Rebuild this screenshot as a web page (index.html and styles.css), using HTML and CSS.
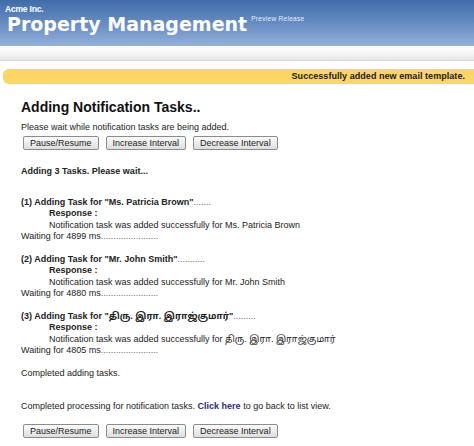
FILE: index.html
```html
<!DOCTYPE html>
<html lang="en">
<head>
  <meta charset="UTF-8" />
  <title>Property Management</title>
  <link rel="stylesheet" href="styles.css">
</head>
<body>

  <div class="header">
    <div class="company">Acme Inc.</div>
    <div class="title">Property Management<span class="release">Preview Release</span></div>
  </div>
  <div class="subbar"></div>

  <div class="message">Successfully added new email template.</div>

  <div class="content">
    <h2>Adding Notification Tasks..</h2>
    <p class="intro">Please wait while notification tasks are being added.</p>
    <div class="controls">
      <button>Pause/Resume</button>
      <button>Increase Interval</button>
      <button>Decrease Interval</button>
    </div>

    <div class="log">
      <div class="line strong count">Adding 3 Tasks. Please wait...</div>

      <div class="task">
        <div class="line strong">(1) Adding Task for "Ms. Patricia Brown"<span class="dots">.......</span></div>
        <div class="line strong indent">Response :</div>
        <div class="line indent">Notification task was added successfully for Ms. Patricia Brown</div>
        <div class="line">Waiting for 4899 ms<span class="dots">.......................</span></div>
      </div>

      <div class="task">
        <div class="line strong">(2) Adding Task for "Mr. John Smith"<span class="dots">...........</span></div>
        <div class="line strong indent">Response :</div>
        <div class="line indent">Notification task was added successfully for Mr. John Smith</div>
        <div class="line">Waiting for 4880 ms<span class="dots">.......................</span></div>
      </div>

      <div class="task">
        <div class="line strong">(3) Adding Task for "திரு. இரா. இராஜ்குமார்"<span class="dots">.........</span></div>
        <div class="line strong indent">Response :</div>
        <div class="line indent">Notification task was added successfully for திரு. இரா. இராஜ்குமார்</div>
        <div class="line">Waiting for 4805 ms<span class="dots">.......................</span></div>
      </div>

      <div class="line done">Completed adding tasks.</div>
      <div class="line finished">Completed processing for notification tasks. <a href="#">Click here</a> to go back to list view.</div>
    </div>

    <div class="controls bottom">
      <button>Pause/Resume</button>
      <button>Increase Interval</button>
      <button>Decrease Interval</button>
    </div>
  </div>

</body>
</html>
```

FILE: styles.css
```css
* {
  box-sizing: border-box;
}

body {
  margin: 0;
  font-family: "Liberation Sans", Arial, "Noto Sans Tamil", sans-serif;
  font-size: 9px;
  color: #222;
  background: #fff;
}

/* Header */
.header {
  height: 46px;
  padding: 4px 0 0 5px;
  background: linear-gradient(to bottom, #3f6ca9 0%, #6a8fc4 55%, #93b0da 100%);
  color: #fff;
}

.company {
  font-weight: bold;
  font-size: 8.5px;
  line-height: 10px;
  letter-spacing: -0.2px;
}

.title {
  font-family: "DejaVu Sans", Verdana, sans-serif;
  font-weight: bold;
  font-size: 19px;
  line-height: 22px;
  margin-left: 2px;
  margin-top: -1px;
}

.release {
  font-family: "Liberation Sans", Arial, sans-serif;
  font-weight: normal;
  font-size: 6.5px;
  vertical-align: top;
  position: relative;
  top: -5px;
  margin-left: 4px;
  letter-spacing: 0.3px;
  color: #e8eef8;
}

.subbar {
  height: 15px;
  background: linear-gradient(to bottom, #ffffff 0%, #f4f4f4 60%, #e6e6e6 100%);
  border-bottom: 1px solid #d6d6d6;
}

/* Status message */
.message {
  margin: 8px 0 0 3px;
  height: 15px;
  line-height: 15px;
  padding-right: 9px;
  text-align: right;
  background: #fbd662;
  border-radius: 6px 0 0 6px;
  font-weight: bold;
  font-size: 9px;
  letter-spacing: 0.05px;
  color: #1a1a1a;
}

/* Content */
.content {
  padding-left: 21px;
}

.content h2 {
  margin: 15px 0 0;
  font-size: 14px;
  line-height: 16px;
  color: #111;
}

.intro {
  margin: 7px 0 0;
  line-height: 11px;
}

.controls {
  display: flex;
  gap: 7px;
  margin: 3px 0 0 2px;
}

.controls button {
  height: 14px;
  padding: 0 6px;
  font-family: "Liberation Sans", Arial, sans-serif;
  font-size: 9px;
  color: #222;
  background: linear-gradient(to bottom, #fbfbfb, #dedede);
  border: 1px solid #8c8c8c;
  border-radius: 2px;
  cursor: pointer;
}

.controls.bottom {
  margin-top: 11px;
}

.log {
  margin-top: 16px;
}

.line {
  line-height: 11.5px;
  white-space: nowrap;
}

.strong {
  font-weight: bold;
}

.count {
  margin-bottom: 19px;
}

.task {
  margin-bottom: 11px;
}

.indent {
  padding-left: 28px;
}

.dots {
  font-weight: normal;
  color: #666;
}

.done {
  margin-top: 10px;
}

.finished {
  margin-top: 22px;
}

.finished a {
  color: #2b2b78;
  font-weight: bold;
  text-decoration: none;
}
```
